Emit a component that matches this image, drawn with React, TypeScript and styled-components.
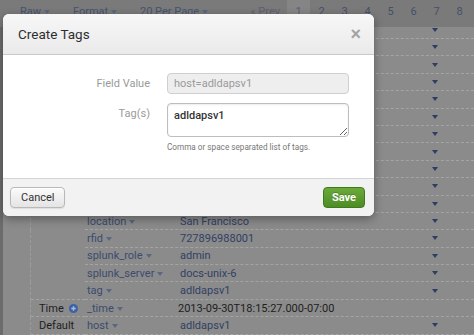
import styled, { createGlobalStyle } from 'styled-components'

const GlobalStyle = createGlobalStyle`
  html, body {
    margin: 0;
    padding: 0;
  }
  body {
    font-family: Roboto, "Liberation Sans", sans-serif;
    background: #8b8b8b;
  }
`

type Field = {
  category?: string
  plus?: boolean
  name?: string
  value?: string
  plain?: boolean
  ruled?: boolean
  noCaret?: boolean
}

// the first rows sit under the dialog, only their carets show
const hidden: Field[] = Array.from({ length: 11 }, () => ({}))

const rows: Field[] = [
  ...hidden,
  { name: 'location', value: 'San Francisco' },
  { name: 'rfid', value: '727896988001' },
  { name: 'splunk_role', value: 'admin' },
  { name: 'splunk_server', value: 'docs-unix-6' },
  { name: 'tag', value: 'adldapsv1', ruled: true },
  {
    category: 'Time',
    plus: true,
    name: '_time',
    value: '2013-09-30T18:15:27.000-07:00',
    plain: true,
    ruled: true,
    noCaret: true,
  },
  { category: 'Default', name: 'host', value: 'adldapsv1', ruled: true },
]

const Page = styled.div`
  position: relative;
  width: 474px;
  height: 335px;
  overflow: hidden;
  background: #8b8b8b;
`

const Toolbar = styled.div`
  position: relative;
  z-index: 1;
  display: flex;
  align-items: flex-start;
  height: 27px;
  padding-left: 20px;
  background: #7a7a7a;
  font-size: 11px;
  line-height: 24px;
  color: #46546f;
`

const ToolLink = styled.span<{ $width?: number }>`
  width: ${(p) => (p.$width ? `${p.$width}px` : 'auto')};
  white-space: nowrap;
`

const Pager = styled.div`
  display: flex;
  margin-left: auto;
  padding-right: 3px;
`

const Prev = styled.span`
  margin-right: 7px;
  color: #5c6170;
`

const PageNum = styled.span<{ $current?: boolean }>`
  width: 23px;
  height: 27px;
  text-align: center;
  background: ${(p) => (p.$current ? '#858585' : 'transparent')};
  color: ${(p) => (p.$current ? '#56607a' : '#45516a')};
`

const SmallCaret = styled.span`
  display: inline-block;
  margin-left: 3px;
  vertical-align: middle;
  border-left: 3px solid transparent;
  border-right: 3px solid transparent;
  border-top: 4px solid #5a6782;
`

const List = styled.div`
  margin-top: -5.4px;
`

const Row = styled.div`
  display: flex;
  height: 17.4px;
  font-size: 11px;
`

const Gutter = styled.div`
  flex: none;
  width: 27px;
  border-left: 3px solid #6c6c6c;
  border-right: 1px dashed #9c9c9c;
`

const Category = styled.div<{ $ruled?: boolean }>`
  flex: none;
  box-sizing: border-box;
  display: flex;
  align-items: center;
  width: 54px;
  padding-left: 8px;
  color: #1e1e1e;
  border-bottom: 1px dashed ${(p) => (p.$ruled ? '#a4a4a4' : 'transparent')};
`

const Main = styled.div`
  flex: 1;
  box-sizing: border-box;
  display: flex;
  align-items: center;
  border-bottom: 1px dashed #a4a4a4;
`

const FieldName = styled.div`
  flex: none;
  width: 91px;
  padding-left: 2px;
  color: #3c4c6e;
  white-space: nowrap;
`

const Value = styled.div<{ $plain?: boolean }>`
  flex: 1;
  padding-left: ${(p) => (p.$plain ? '0' : '2px')};
  color: ${(p) => (p.$plain ? '#1e1e1e' : '#314164')};
  white-space: nowrap;
`

const CaretCell = styled.div`
  flex: none;
  width: 42px;
`

const RowCaret = styled.span`
  display: block;
  width: 0;
  border-left: 3.5px solid transparent;
  border-right: 3.5px solid transparent;
  border-top: 4px solid #2f3d5e;
`

const PlusIcon = () => (
  <svg width="9" height="9" viewBox="0 0 10 10" style={{ marginLeft: 5 }}>
    <circle cx="5" cy="5" r="5" fill="#3b62a6" />
    <path d="M5 2.5v5M2.5 5h5" stroke="#a9bcd9" strokeWidth="1.6" />
  </svg>
)

const Modal = styled.div`
  position: absolute;
  left: 3px;
  top: 14px;
  z-index: 2;
  display: flex;
  flex-direction: column;
  width: 371px;
  height: 202px;
  overflow: hidden;
  border-radius: 6px;
  background: #fff;
  box-shadow: 0 3px 10px rgba(0, 0, 0, 0.35);
`

const Header = styled.div`
  box-sizing: border-box;
  display: flex;
  align-items: center;
  justify-content: space-between;
  height: 41px;
  padding: 0 13px 0 15px;
  border-bottom: 1px solid #c9c9c9;
  background: linear-gradient(#f7f7f7, #eaeaea);
`

const Title = styled.h3`
  margin: 0;
  font-size: 13.5px;
  font-weight: 400;
  color: #2e2e2e;
`

const Close = styled.span`
  font-family: "Liberation Sans", sans-serif;
  font-size: 18px;
  font-weight: 700;
  color: #a3a3a3;
`

const Body = styled.div`
  flex: 1;
  display: grid;
  grid-template-columns: 147px 182px;
  column-gap: 17px;
  row-gap: 9px;
  align-content: start;
  padding-top: 17.5px;
`

const Label = styled.label`
  font-size: 11px;
  line-height: 21px;
  text-align: right;
  color: #9a9a9a;
`

const Control = styled.div`
  display: flex;
  flex-direction: column;
  gap: 5px;
`

const ValueInput = styled.input`
  box-sizing: border-box;
  height: 21px;
  padding: 0 6px;
  border: 1px solid #cfcfcf;
  border-radius: 4px;
  background: #eeeeee;
  font-family: Roboto, "Liberation Sans", sans-serif;
  font-size: 11px;
  color: #9a9a9a;
  outline: none;
`

const TagArea = styled.textarea`
  box-sizing: border-box;
  height: 34px;
  padding: 5px 6px;
  border: 1px solid #bdbdbd;
  border-radius: 4px;
  background: #fff;
  box-shadow: inset 0 1px 2px rgba(0, 0, 0, 0.08);
  font-family: Roboto, "Liberation Sans", sans-serif;
  font-size: 11px;
  font-weight: 500;
  color: #333;
  outline: none;
  resize: vertical;
`

const Help = styled.span`
  font-size: 8.2px;
  line-height: 10px;
  color: #777;
`

const Footer = styled.div`
  box-sizing: border-box;
  display: flex;
  align-items: center;
  justify-content: space-between;
  height: 38px;
  padding: 0 9px 0 7px;
  border-top: 1px solid #d4d4d4;
  background: #f2f2f2;
`

const Button = styled.button<{ $primary?: boolean }>`
  box-sizing: border-box;
  height: 21px;
  padding: 0 ${(p) => (p.$primary ? '8px' : '10px')};
  border: 1px solid ${(p) => (p.$primary ? '#3f7a1e' : '#b9b9b9')};
  border-radius: 4px;
  background: ${(p) =>
    p.$primary
      ? 'linear-gradient(#6aa93a, #4e8d25)'
      : 'linear-gradient(#fbfbfb, #e4e4e4)'};
  box-shadow: ${(p) =>
    p.$primary ? 'none' : 'inset 0 1px 0 #fff, 0 1px 1px rgba(0,0,0,0.08)'};
  font-family: Roboto, "Liberation Sans", sans-serif;
  font-size: 11px;
  font-weight: ${(p) => (p.$primary ? 700 : 400)};
  color: ${(p) => (p.$primary ? '#fff' : '#333')};
  text-shadow: ${(p) => (p.$primary ? '0 -1px 0 rgba(0,0,0,0.2)' : 'none')};
`

export default function App() {
  return (
    <>
      <GlobalStyle />
      <Page>
        <Toolbar>
          <ToolLink $width={53}>
            Raw<SmallCaret />
          </ToolLink>
          <ToolLink $width={67}>
            Format<SmallCaret />
          </ToolLink>
          <ToolLink>
            20 Per Page<SmallCaret />
          </ToolLink>
          <Pager>
            <Prev>« Prev</Prev>
            {[1, 2, 3, 4, 5, 6, 7, 8].map((n) => (
              <PageNum key={n} $current={n === 1}>
                {n}
              </PageNum>
            ))}
          </Pager>
        </Toolbar>

        <List>
          {rows.map((r, i) => (
            <Row key={i}>
              <Gutter />
              <Category $ruled={r.ruled}>
                {r.category}
                {r.plus && <PlusIcon />}
              </Category>
              <Main>
                <FieldName>
                  {r.name}
                  {r.name && <SmallCaret />}
                </FieldName>
                <Value $plain={r.plain}>{r.value}</Value>
                <CaretCell>{!r.noCaret && <RowCaret />}</CaretCell>
              </Main>
            </Row>
          ))}
        </List>

        <Modal>
          <Header>
            <Title>Create Tags</Title>
            <Close>×</Close>
          </Header>
          <Body>
            <Label>Field Value</Label>
            <ValueInput readOnly value="host=adldapsv1" />
            <Label>Tag(s)</Label>
            <Control>
              <TagArea defaultValue="adldapsv1" />
              <Help>Comma or space separated list of tags.</Help>
            </Control>
          </Body>
          <Footer>
            <Button>Cancel</Button>
            <Button $primary>Save</Button>
          </Footer>
        </Modal>
      </Page>
    </>
  )
}
